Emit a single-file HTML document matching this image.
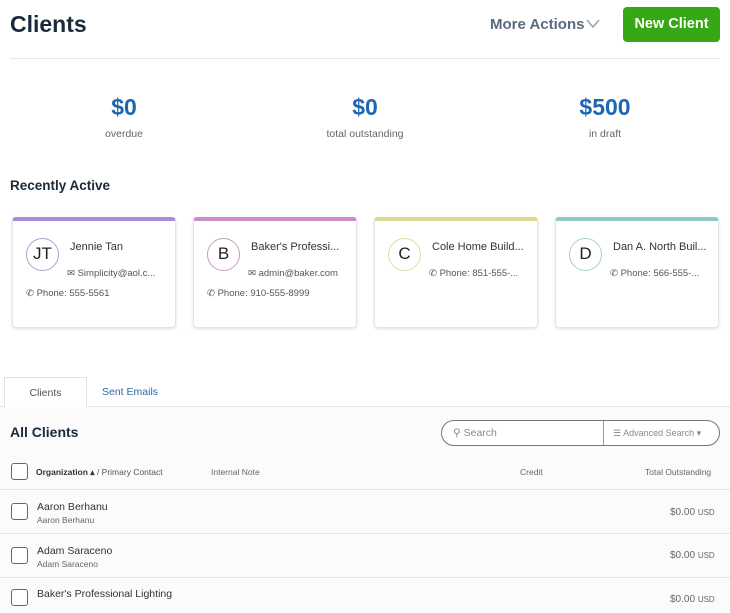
<!DOCTYPE html>
<html><head><style>
*{box-sizing:border-box;margin:0;padding:0}
body{width:730px;height:613px;overflow:hidden;background:#fff;font-family:"Liberation Sans",sans-serif;color:#1d2b3a;position:relative}
.a{position:absolute;white-space:nowrap}
.card{position:absolute;top:217px;width:164px;height:111px;border:1px solid #e2e4e7;border-top:4px solid;border-radius:4px;box-shadow:0 1px 3px rgba(0,0,0,.12);background:#fff}
.av{position:absolute;left:13px;top:17px;width:33px;height:33px;border-radius:50%;border:1.5px solid;font-size:17px;text-align:center;line-height:30px;color:#222}
.nm{position:absolute;left:57px;top:20px;font-size:11px;color:#333}
.sm{position:absolute;font-size:9.5px;color:#555}
.cb{position:absolute;left:11px;width:17px;height:17px;border:1.5px solid #666;border-radius:3px;background:#fff}
.row{position:absolute;left:0;width:730px;border-top:1px solid #e4e6e8}
</style></head><body>
<div class="a" style="left:10px;top:11px;font-size:23px;font-weight:bold;color:#1b2a3a">Clients</div>
<div class="a" style="left:490px;top:16px;font-size:15px;font-weight:bold;color:#5a6b7e">More Actions</div>
<svg class="a" style="left:586px;top:18px" width="14" height="12"><path d="M1 2l6 7 6-7" fill="none" stroke="#9aa5b1" stroke-width="1.6"/></svg>
<div class="a" style="left:623px;top:7px;width:97px;height:35px;background:#36a815;border-radius:4px;color:#fff;font-size:14.5px;font-weight:bold;text-align:center;line-height:35px">New Client</div>
<div class="a" style="left:10px;top:58px;width:710px;height:1px;background:#e6e8ea"></div>
<div class="a" style="left:74px;top:94px;width:100px;text-align:center;font-size:23px;font-weight:bold;color:#1f66b0">$0</div>
<div class="a" style="left:74px;top:128px;width:100px;text-align:center;font-size:10.5px;color:#666">overdue</div>
<div class="a" style="left:315px;top:94px;width:100px;text-align:center;font-size:23px;font-weight:bold;color:#1f66b0">$0</div>
<div class="a" style="left:305px;top:128px;width:120px;text-align:center;font-size:10.5px;color:#666">total outstanding</div>
<div class="a" style="left:555px;top:94px;width:100px;text-align:center;font-size:23px;font-weight:bold;color:#1f66b0">$500</div>
<div class="a" style="left:555px;top:128px;width:100px;text-align:center;font-size:10.5px;color:#666">in draft</div>
<div class="a" style="left:10px;top:178px;font-size:13.5px;font-weight:bold;color:#1b2a3a">Recently Active</div>

<div class="card" style="left:12px;border-top-color:#a98ed6"><div class="av" style="border-color:#b89bcf">JT</div><div class="nm">Jennie Tan</div><div class="sm" style="left:54px;top:47px">✉ Simplicity@aol.c...</div><div class="sm" style="left:13px;top:67px">✆ Phone: 555-5561</div></div>
<div class="card" style="left:193px;border-top-color:#c88ccb"><div class="av" style="border-color:#c99bc9">B</div><div class="nm">Baker's Professi...</div><div class="sm" style="left:54px;top:47px">✉ admin@baker.com</div><div class="sm" style="left:13px;top:67px">✆ Phone: 910-555-8999</div></div>
<div class="card" style="left:374px;border-top-color:#dcd98f"><div class="av" style="border-color:#e0dca0">C</div><div class="nm">Cole Home Build...</div><div class="sm" style="left:54px;top:47px">✆ Phone: 851-555-...</div></div>
<div class="card" style="left:555px;border-top-color:#93c7c9"><div class="av" style="border-color:#a6cfd0">D</div><div class="nm">Dan A. North Buil...</div><div class="sm" style="left:54px;top:47px">✆ Phone: 566-555-...</div></div>

<div class="a" style="left:0;top:406px;width:730px;height:1px;background:#e1e3e6"></div>
<div class="a" style="left:4px;top:377px;width:83px;height:30px;border:1px solid #e1e3e6;border-bottom:none;background:#fff;font-size:10.5px;color:#555;text-align:center;line-height:30px">Clients</div>
<div class="a" style="left:102px;top:386px;font-size:10.5px;color:#2a6aa8">Sent Emails</div>
<div class="a" style="left:0;top:407px;width:730px;height:206px;background:#fbfbfb"></div>
<div class="a" style="left:10px;top:424px;font-size:14px;font-weight:bold;color:#1b2a3a">All Clients</div>
<div class="a" style="left:441px;top:420px;width:279px;height:26px;border:1.5px solid #777;border-radius:13px;background:#fff"></div>
<div class="a" style="left:603px;top:421px;width:1px;height:24px;background:#999"></div>
<div class="a" style="left:453px;top:427px;font-size:10.5px;color:#888">⚲ Search</div>
<div class="a" style="left:613px;top:428px;font-size:9px;color:#888">☰ Advanced Search ▾</div>
<div class="cb" style="top:463px"></div>
<div class="a" style="left:36px;top:467px;font-size:8.5px;color:#555"><b style="color:#333">Organization ▴</b> / Primary Contact</div>
<div class="a" style="left:211px;top:467px;font-size:8.5px;color:#666">Internal Note</div>
<div class="a" style="left:520px;top:467px;font-size:8.5px;color:#666">Credit</div>
<div class="a" style="left:645px;top:467px;font-size:8.5px;color:#666">Total Outstanding</div>
<div class="row" style="top:489px"></div>
<div class="cb" style="top:503px"></div>
<div class="a" style="left:37px;top:501px;font-size:10.5px;color:#333">Aaron Berhanu</div>
<div class="a" style="left:37px;top:515px;font-size:8.5px;color:#666">Aaron Berhanu</div>
<div class="a" style="left:670px;top:507px;font-size:10px;color:#666">$0.00 <span style="font-size:8px">USD</span></div>
<div class="row" style="top:533px"></div>
<div class="cb" style="top:547px"></div>
<div class="a" style="left:37px;top:545px;font-size:10.5px;color:#333">Adam Saraceno</div>
<div class="a" style="left:37px;top:559px;font-size:8.5px;color:#666">Adam Saraceno</div>
<div class="a" style="left:670px;top:550px;font-size:10px;color:#666">$0.00 <span style="font-size:8px">USD</span></div>
<div class="row" style="top:577px"></div>
<div class="cb" style="top:589px"></div>
<div class="a" style="left:37px;top:588px;font-size:10.5px;color:#333">Baker's Professional Lighting</div>
<div class="a" style="left:670px;top:594px;font-size:10px;color:#666">$0.00 <span style="font-size:8px">USD</span></div>
</body></html>
